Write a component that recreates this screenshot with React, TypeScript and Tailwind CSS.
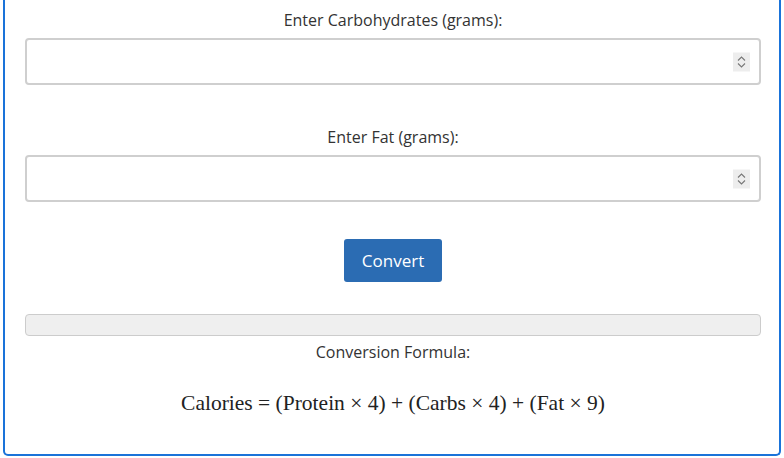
import React from "react";

function Spinner() {
  return (
    <div className="absolute right-[11px] top-1/2 -translate-y-1/2 w-[17px] h-[19px] bg-[#ededed] flex flex-col items-center justify-center gap-[1px]">
      <svg width="9" height="6" viewBox="0 0 9 6" fill="none" stroke="#777" strokeWidth="1.1">
        <path d="M1 5 L4.5 1.5 L8 5" />
      </svg>
      <svg width="9" height="6" viewBox="0 0 9 6" fill="none" stroke="#777" strokeWidth="1.1">
        <path d="M1 1 L4.5 4.5 L8 1" />
      </svg>
    </div>
  );
}

function Field({ label }: { label: string }) {
  return (
    <div className="flex flex-col items-center">
      <label className="text-[16px] leading-[24px] text-[#333]">{label}</label>
      <div className="relative w-full mt-[6px]">
        <input
          type="text"
          className="w-full h-[47px] border-2 border-[#cfcfcf] rounded-[4px] bg-white px-3 focus:outline-none"
        />
        <Spinner />
      </div>
    </div>
  );
}

export default function App() {
  return (
    <div className="w-[784px] h-[458px] bg-white overflow-hidden" style={{ fontFamily: '"Open Sans", "Noto Sans", sans-serif' }}>
      <div className="mx-[3px] border-2 border-t-0 border-[#1a73d9] rounded-b-[5px] pl-[20px] pr-[18px] pt-[8px] pb-[14px] h-[456px]">
        <Field label="Enter Carbohydrates (grams):" />
        <div className="mt-[40px]">
          <Field label="Enter Fat (grams):" />
        </div>
        <div className="flex justify-center mt-[37px]">
          <button className="w-[98px] h-[43px] bg-[#2b6cb3] text-white text-[17px] rounded-[3px]">
            Convert
          </button>
        </div>
        <div className="mt-[32px] h-[22px] bg-[#efefef] border border-[#cccccc] rounded-[4px]" />
        <p className="mt-[4px] text-center text-[16px] leading-[24px] text-[#333]">Conversion Formula:</p>
        <p
          className="mt-[24px] text-center text-[21.5px] leading-[30px] text-[#222]"
          style={{ fontFamily: '"Liberation Serif", "DejaVu Serif", serif' }}
        >
          Calories = (Protein × 4) + (Carbs × 4) + (Fat × 9)
        </p>
      </div>
    </div>
  );
}
